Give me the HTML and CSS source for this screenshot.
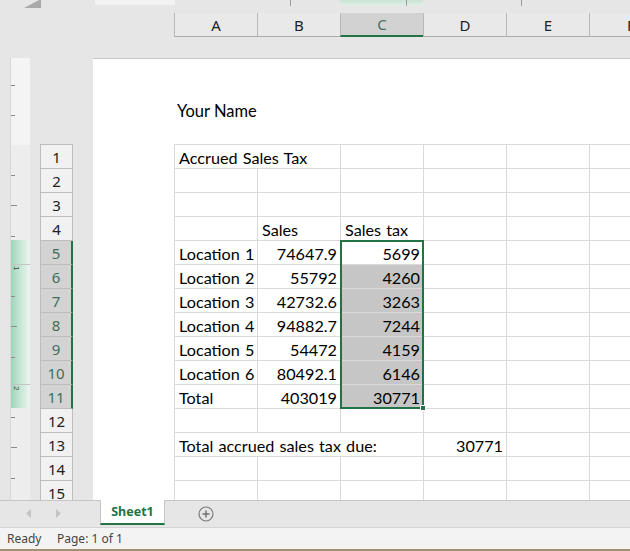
FILE: index.html
```html
<!DOCTYPE html>
<html>
<head>
<meta charset="utf-8">
<link rel="stylesheet" href="styles.css">
</head>
<body>
<div class="app">
  <svg class="hruler" width="630" height="13" viewBox="0 0 630 13">
    <defs>
      <linearGradient id="hg" x1="0" y1="0" x2="0" y2="1">
        <stop offset="0" stop-color="#c9e4d4"/>
        <stop offset="1" stop-color="#e3efe8"/>
      </linearGradient>
    </defs>
    <rect width="630" height="13" fill="#e6e6e6"/>
    <polygon points="24,8 41,8 41,-1" fill="#a9a9a9"/>
    <rect x="95" y="0" width="80" height="5" fill="#f3f3f3"/>
    <rect x="340" y="0" width="83" height="6" fill="url(#hg)"/>
    <line x1="290.5" y1="0" x2="290.5" y2="6" stroke="#9c9c9c"/>
    <line x1="406.5" y1="0" x2="406.5" y2="6" stroke="#9c9c9c"/>
    <line x1="521.5" y1="0" x2="521.5" y2="6" stroke="#9c9c9c"/>
  </svg>

  <div class="colheads">
    <div class="corner"></div>
    <div class="ch">A</div>
    <div class="ch">B</div>
    <div class="ch sel">C</div>
    <div class="ch">D</div>
    <div class="ch">E</div>
    <div class="ch">F</div>
  </div>

  <div class="gap"></div>

  <div class="main">
    <svg class="vruler" width="20" height="442" viewBox="0 0 20 442">
      <defs>
        <linearGradient id="vg" x1="0" y1="0" x2="1" y2="0">
          <stop offset="0" stop-color="#9bd5b6"/>
          <stop offset="1" stop-color="#eef6f1"/>
        </linearGradient>
      </defs>
      <rect width="20" height="442" fill="#ededed"/>
      <rect width="20" height="87" fill="#f4f4f4"/>
      <rect y="182" width="20" height="168" fill="url(#vg)"/>
      <line x1="0.5" y1="0" x2="0.5" y2="442" stroke="#d8d8d8"/>
      <g stroke="#8a8a8a" stroke-width="1">
        <line x1="1" y1="27.5" x2="5" y2="27.5"/>
        <line x1="1" y1="57.5" x2="5" y2="57.5"/>
        <line x1="1" y1="117.5" x2="5" y2="117.5"/>
        <line x1="1" y1="147.5" x2="7" y2="147.5"/>
        <line x1="1" y1="178.5" x2="5" y2="178.5"/>
        <line x1="1" y1="238.5" x2="5" y2="238.5"/>
        <line x1="1" y1="268.5" x2="7" y2="268.5"/>
        <line x1="1" y1="299.5" x2="5" y2="299.5"/>
        <line x1="1" y1="359.5" x2="5" y2="359.5"/>
        <line x1="1" y1="389.5" x2="7" y2="389.5"/>
        <line x1="1" y1="420.5" x2="5" y2="420.5"/>
      </g>
      <line x1="2" y1="206.5" x2="20" y2="206.5" stroke="#c4c4c4"/>
      <line x1="2" y1="326.5" x2="20" y2="326.5" stroke="#c4c4c4"/>
      <text x="0" y="0" transform="translate(4 208) rotate(90)" font-family="Liberation Sans, sans-serif" font-size="8" fill="#444">1</text>
      <text x="0" y="0" transform="translate(4 328) rotate(90)" font-family="Liberation Sans, sans-serif" font-size="8" fill="#444">2</text>
    </svg>

    <div class="rowheads">
      <div class="rh-list">
        <div class="rh">1</div>
        <div class="rh">2</div>
        <div class="rh">3</div>
        <div class="rh">4</div>
        <div class="rh sel">5</div>
        <div class="rh sel">6</div>
        <div class="rh sel">7</div>
        <div class="rh sel">8</div>
        <div class="rh sel">9</div>
        <div class="rh sel">10</div>
        <div class="rh sel">11</div>
        <div class="rh">12</div>
        <div class="rh">13</div>
        <div class="rh">14</div>
        <div class="rh">15</div>
      </div>
    </div>

    <div class="gutter"></div>

    <div class="page">
      <div class="page-head">Your Name</div>
      <div class="sheet">
        <!-- row 1 -->
        <div class="c span2">Accrued Sales Tax</div><div class="c"></div><div class="c"></div><div class="c"></div><div class="c"></div>
        <!-- row 2 -->
        <div class="c"></div><div class="c"></div><div class="c"></div><div class="c"></div><div class="c"></div><div class="c"></div>
        <!-- row 3 -->
        <div class="c"></div><div class="c"></div><div class="c"></div><div class="c"></div><div class="c"></div><div class="c"></div>
        <!-- row 4 -->
        <div class="c"></div><div class="c">Sales</div><div class="c">Sales tax</div><div class="c"></div><div class="c"></div><div class="c"></div>
        <!-- row 5 -->
        <div class="c">Location 1</div><div class="c n">74647.9</div><div class="c n">5699</div><div class="c"></div><div class="c"></div><div class="c"></div>
        <!-- row 6 -->
        <div class="c">Location 2</div><div class="c n">55792</div><div class="c n s">4260</div><div class="c"></div><div class="c"></div><div class="c"></div>
        <!-- row 7 -->
        <div class="c">Location 3</div><div class="c n">42732.6</div><div class="c n s">3263</div><div class="c"></div><div class="c"></div><div class="c"></div>
        <!-- row 8 -->
        <div class="c">Location 4</div><div class="c n">94882.7</div><div class="c n s">7244</div><div class="c"></div><div class="c"></div><div class="c"></div>
        <!-- row 9 -->
        <div class="c">Location 5</div><div class="c n">54472</div><div class="c n s">4159</div><div class="c"></div><div class="c"></div><div class="c"></div>
        <!-- row 10 -->
        <div class="c">Location 6</div><div class="c n">80492.1</div><div class="c n s">6146</div><div class="c"></div><div class="c"></div><div class="c"></div>
        <!-- row 11 -->
        <div class="c">Total</div><div class="c n">403019</div><div class="c n s">30771</div><div class="c"></div><div class="c"></div><div class="c"></div>
        <!-- row 12 -->
        <div class="c"></div><div class="c"></div><div class="c"></div><div class="c"></div><div class="c"></div><div class="c"></div>
        <!-- row 13 -->
        <div class="c span3">Total accrued sales tax due:</div><div class="c n">30771</div><div class="c"></div><div class="c"></div>
        <!-- row 14 -->
        <div class="c"></div><div class="c"></div><div class="c"></div><div class="c"></div><div class="c"></div><div class="c"></div>
        <!-- row 15 -->
        <div class="c"></div><div class="c"></div><div class="c"></div><div class="c"></div><div class="c"></div><div class="c"></div>

        <div class="selbox"><span class="handle"></span></div>
      </div>
    </div>
  </div>

  <div class="tabbar">
    <svg class="nav" width="100" height="26" viewBox="0 0 100 26">
      <polygon points="31,8 31,17 26,12.5" fill="#c4c4c4"/>
      <polygon points="56,8 56,17 61,12.5" fill="#c4c4c4"/>
    </svg>
    <div class="tab">Sheet1</div>
    <svg class="add" width="16" height="16" viewBox="0 0 16 16">
      <circle cx="8" cy="8" r="7" fill="none" stroke="#7a7a7a" stroke-width="1.2"/>
      <line x1="4.5" y1="8" x2="11.5" y2="8" stroke="#6a6a6a" stroke-width="1.4"/>
      <line x1="8" y1="4.5" x2="8" y2="11.5" stroke="#6a6a6a" stroke-width="1.4"/>
    </svg>
  </div>

  <div class="status">
    <span class="st-ready">Ready</span>
    <span class="st-page">Page: 1 of 1</span>
  </div>
</div>
</body>
</html>
```

FILE: styles.css
```css
* { box-sizing: border-box; }

html, body {
  margin: 0;
  padding: 0;
}

body {
  width: 630px;
  height: 551px;
  overflow: hidden;
  background: #e6e6e6;
  font-family: Lato, "Noto Sans", sans-serif;
  color: #000;
}

.app {
  display: flex;
  flex-direction: column;
  width: 630px;
  height: 551px;
}

.hruler {
  display: block;
  flex: none;
}

.colheads {
  display: grid;
  grid-template-columns: 174px repeat(6, 83px);
  height: 24px;
  width: 630px;
  flex: none;
  overflow: hidden;
}

.ch {
  border-left: 1px solid #b9b9b9;
  border-bottom: 1px solid #ababab;
  background: #e9e9e9;
  display: flex;
  align-items: center;
  justify-content: center;
  font-family: "Noto Sans", sans-serif;
  font-size: 15px;
  color: #222;
}

.ch.sel {
  background: #d2d2d2;
  border-bottom: 2px solid #217346;
  color: #46705c;
}

.gap {
  height: 21px;
  flex: none;
}

.main {
  display: flex;
  height: 442px;
  flex: none;
  overflow: hidden;
}

.vruler {
  display: block;
  flex: none;
  margin-left: 10px;
}

.rowheads {
  flex: none;
  width: 33px;
  margin-left: 10px;
  padding-top: 86px;
}

.rh-list {
  border-top: 1px solid #bdbdbd;
  border-left: 1px solid #bdbdbd;
}

.rh {
  height: 24px;
  border-bottom: 1px solid #bdbdbd;
  border-right: 1px solid #bdbdbd;
  background: #f1f1f1;
  display: flex;
  align-items: center;
  justify-content: center;
  font-family: "Noto Sans", sans-serif;
  font-size: 15px;
  color: #222;
}

.rh.sel {
  background: #d3d3d3;
  border-right: 2px solid #217346;
  color: #3f6f58;
}

.gutter {
  flex: none;
  width: 20px;
}

.page {
  flex: 1;
  min-width: 0;
  background: #fff;
  border-top: 1px solid #c8c8c8;
  overflow: hidden;
}

.page-head {
  height: 85px;
  padding-left: 84px;
  padding-top: 42px;
  font-size: 16.5px;
  line-height: 20px;
  white-space: nowrap;
}

.sheet {
  position: relative;
  margin-left: 81px;
  display: grid;
  grid-template-columns: repeat(6, 83px);
  grid-auto-rows: 24px;
  width: max-content;
  border-top: 1px solid #dadada;
  border-left: 1px solid #dadada;
}

.c {
  border-right: 1px solid #dadada;
  border-bottom: 1px solid #dadada;
  padding: 0 3px 0 4px;
  display: flex;
  align-items: flex-end;
  white-space: nowrap;
  font-size: 16.2px;
  line-height: 20px;
  word-spacing: 1px;
}

.c.n { justify-content: flex-end; }
.c.s { background: #c6c6c6; }
.span2 { grid-column: span 2; }
.span3 { grid-column: span 3; }

.selbox {
  position: absolute;
  grid-column: 3 / 4;
  grid-row: 5 / 12;
  top: -1px;
  left: -1px;
  right: 0;
  bottom: 0;
  border: 2px solid #217346;
  pointer-events: none;
}

.handle {
  position: absolute;
  right: -4px;
  bottom: -4px;
  width: 6px;
  height: 6px;
  background: #217346;
  border: 1px solid #fff;
}

.tabbar {
  flex: none;
  height: 27px;
  display: flex;
  align-items: flex-start;
  background: #e6e6e6;
  border-top: 1px solid #c6c6c6;
}

.nav {
  display: block;
  flex: none;
}

.tab {
  flex: none;
  width: 65px;
  height: 25px;
  margin-top: -1px;
  background: #fff;
  border-left: 1px solid #c6c6c6;
  border-right: 1px solid #c6c6c6;
  border-bottom: 2px solid #217346;
  display: flex;
  align-items: center;
  justify-content: center;
  font-family: "Noto Sans", sans-serif;
  font-weight: bold;
  font-size: 12.5px;
  color: #217346;
}

.add {
  display: block;
  flex: none;
  margin-left: 33px;
  margin-top: 5px;
}

.status {
  flex: none;
  height: 24px;
  display: flex;
  align-items: center;
  padding-left: 7px;
  background: #f3f3f3;
  border-top: 1px solid #d4d4d4;
  border-bottom: 2px solid #a39170;
  font-family: "Noto Sans", sans-serif;
  font-size: 12px;
  color: #444;
}

.st-ready {
  width: 50px;
}
```
